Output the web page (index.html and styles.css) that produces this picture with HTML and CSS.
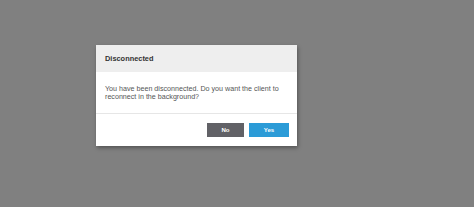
FILE: index.html
```html
<!DOCTYPE html>
<html>
<head>
<meta charset="utf-8">
<link rel="stylesheet" href="styles.css">
</head>
<body>
<div class="dialog">
  <div class="dialog-header">Disconnected</div>
  <div class="dialog-body">You have been disconnected. Do you want the client to reconnect in the background?</div>
  <div class="dialog-footer">
    <button class="btn btn-no">No</button>
    <button class="btn btn-yes">Yes</button>
  </div>
</div>
</body>
</html>
```
FILE: styles.css
```css
html, body {
  margin: 0;
  height: 100%;
  background: #808080;
}
body {
  padding: 45px 0 0 96px;
  box-sizing: border-box;
  font-family: "Liberation Sans", Arial, sans-serif;
}
.dialog {
  width: 201px;
  background: #ffffff;
  box-shadow: 1px 2px 4px rgba(0, 0, 0, 0.35);
}
.dialog-header {
  height: 27px;
  box-sizing: border-box;
  padding: 0 9px;
  display: flex;
  align-items: center;
  background: #eeeeee;
  color: #333333;
  font-size: 7.4px;
  font-weight: bold;
}
.dialog-body {
  padding: 12.6px 12px 11.4px 9px;
  font-size: 7.15px;
  line-height: 8.5px;
  color: #555555;
  border-bottom: 1px solid #e6e6e6;
}
.dialog-footer {
  display: flex;
  justify-content: flex-end;
  gap: 5px;
  padding: 9px 8px 9px 0;
}
.btn {
  height: 14px;
  border: none;
  margin: 0;
  padding: 0;
  color: #ffffff;
  font-family: "Liberation Sans", Arial, sans-serif;
  font-size: 6.1px;
  font-weight: bold;
}
.btn-no {
  width: 37px;
  background: #616166;
}
.btn-yes {
  width: 40px;
  background: #2b9bd7;
}
```
